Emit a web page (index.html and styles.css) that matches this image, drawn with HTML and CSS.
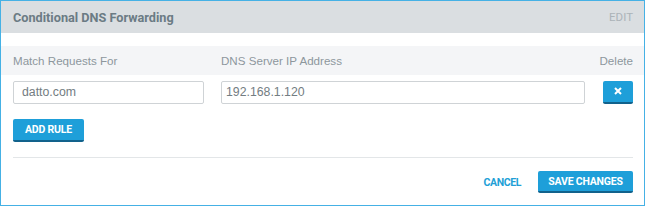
FILE: index.html
```html
<!DOCTYPE html>
<html lang="en">
<head>
<meta charset="UTF-8">
<title>Conditional DNS Forwarding</title>
<link rel="stylesheet" href="styles.css">
</head>
<body>
  <div class="panel">
    <div class="panel-head">
      <h3 class="panel-title">Conditional DNS Forwarding</h3>
      <span class="edit-link">EDIT</span>
    </div>

    <div class="col-heads">
      <span class="col-match">Match Requests For</span>
      <span class="col-server">DNS Server IP Address</span>
      <span class="col-delete">Delete</span>
    </div>

    <div class="rules">
      <div class="rule-row">
        <input class="field field-match" type="text" value="datto.com">
        <input class="field field-server" type="text" value="192.168.1.120">
        <button class="btn btn-delete" title="Delete">
          <svg width="8" height="8" viewBox="0 0 8 8"><path d="M1 1L7 7M7 1L1 7" stroke="#fff" stroke-width="2"/></svg>
        </button>
      </div>
      <button class="btn btn-add">ADD RULE</button>
    </div>

    <div class="panel-foot">
      <button class="btn-link">CANCEL</button>
      <button class="btn btn-save">SAVE CHANGES</button>
    </div>
  </div>
</body>
</html>
```

FILE: styles.css
```css
* {
  box-sizing: border-box;
}

body {
  margin: 0;
  background: #fff;
  font-family: "Liberation Sans", Arial, sans-serif;
}

.panel {
  width: 645px;
  height: 206px;
  border: 1px solid #45b1e5;
  background: #fff;
}

.panel-head {
  height: 32px;
  background: #dadee1;
  display: flex;
  align-items: center;
  justify-content: space-between;
  padding: 0 11px 0 12px;
}

.panel-title {
  margin: 0;
  font-family: Roboto, sans-serif;
  font-size: 12.7px;
  font-weight: 700;
  color: #6b7b84;
}

.edit-link {
  font-family: Roboto, sans-serif;
  font-size: 11.5px;
  color: #abb3b8;
}

.col-heads {
  margin-top: 13px;
  height: 29px;
  background: #f4f5f7;
  display: flex;
  align-items: center;
  padding: 0 11px 0 12px;
  font-size: 11.6px;
  color: #8d979d;
}

.col-match {
  width: 208px;
}

.col-server {
  flex: 1;
}

.rules {
  padding: 5px 11px 0 12px;
}

.rule-row {
  display: flex;
  align-items: center;
  height: 24px;
}

.field {
  height: 23px;
  border: 1px solid #cfd3d6;
  border-radius: 2px;
  padding: 0 8px;
  font-family: "Liberation Sans", Arial, sans-serif;
  font-size: 12.3px;
  color: #737d82;
  outline: none;
}

.field-match {
  width: 191px;
  margin-right: 17px;
}

.field-server {
  width: 364px;
  padding-left: 4px;
  margin-right: 18px;
}

.btn {
  border: none;
  border-bottom: 2px solid #12628c;
  border-radius: 2px;
  background: #1e9fd9;
  color: #fff;
  font-family: Roboto, sans-serif;
  font-weight: 700;
  cursor: pointer;
}

.btn-delete {
  width: 30px;
  height: 23px;
  padding: 0;
  display: flex;
  align-items: center;
  justify-content: center;
}

.btn-add {
  margin-top: 15px;
  width: 71px;
  height: 23px;
  padding: 0;
  font-size: 10.5px;
  letter-spacing: -0.2px;
}

.panel-foot {
  margin: 15px 11px 0 12px;
  border-top: 1px solid #e3e6e8;
  display: flex;
  justify-content: flex-end;
  align-items: center;
  padding-top: 13px;
}

.btn-link {
  border: none;
  background: none;
  padding: 0;
  margin-right: 17px;
  font-family: Roboto, sans-serif;
  font-weight: 700;
  font-size: 10.5px;
  letter-spacing: -0.4px;
  color: #229fd6;
  cursor: pointer;
}

.btn-save {
  width: 95px;
  height: 22px;
  padding: 0;
  font-size: 10.5px;
  letter-spacing: -0.2px;
}
```
